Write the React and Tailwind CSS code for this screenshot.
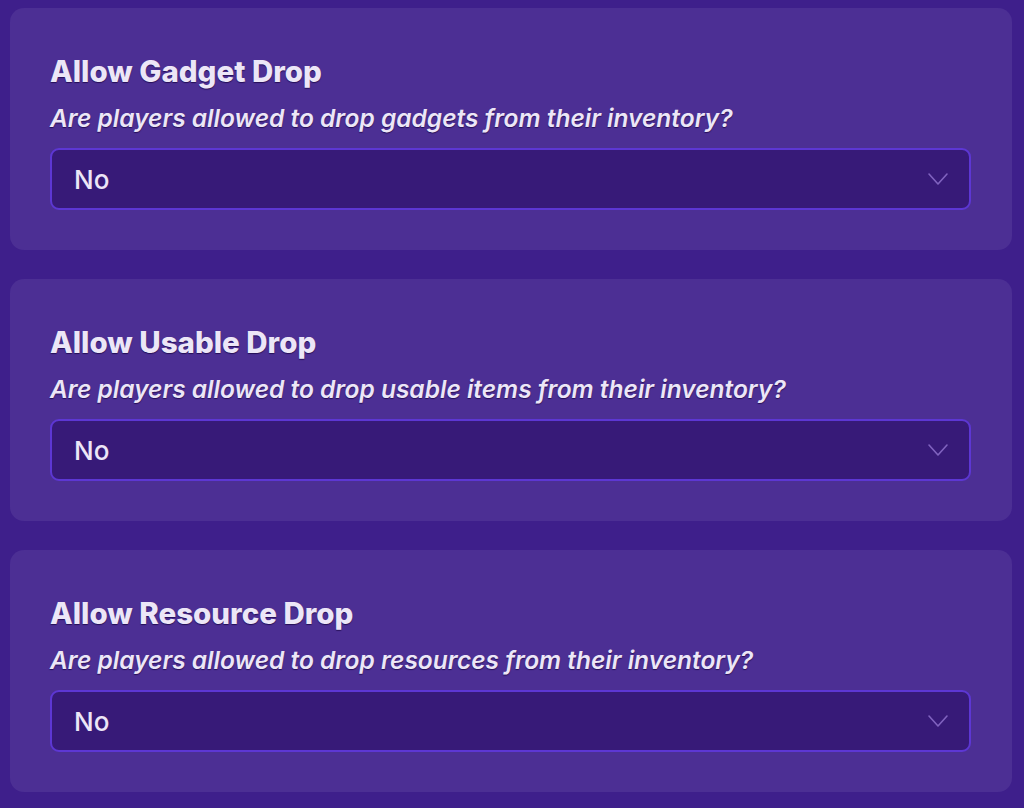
import React from "react";

const settings = [
  {
    title: "Allow Gadget Drop",
    description: "Are players allowed to drop gadgets from their inventory?",
    value: "No",
  },
  {
    title: "Allow Usable Drop",
    description: "Are players allowed to drop usable items from their inventory?",
    value: "No",
  },
  {
    title: "Allow Resource Drop",
    description: "Are players allowed to drop resources from their inventory?",
    value: "No",
  },
];

const ChevronDown = () => (
  <svg width="22" height="14" viewBox="0 0 22 14" fill="none">
    <path d="M2 2 L11 12 L20 2" stroke="#8063bf" strokeWidth="1.6" strokeLinecap="round" strokeLinejoin="round" />
  </svg>
);

const SettingCard = ({ title, description, value }) => {
  return (
    <div className="bg-[#4c2f94] rounded-[14px] pl-10 pr-[41px] pt-[45px] pb-10">
      <h2 className="text-[29.5px] leading-[36px] font-extrabold text-[#ece6f7] [text-shadow:0_1px_1px_rgba(20,0,60,0.7)]">
        {title}
      </h2>
      <p className="mt-[12px] text-[24.5px] leading-[34px] italic font-semibold text-[#ece6f7] [text-shadow:0_1px_1px_rgba(20,0,60,0.7)]">
        {description}
      </p>
      <div className="mt-[13px] h-[62px] flex items-center justify-between bg-[#371a78] border-2 border-[#5d37d3] rounded-[9px] pl-[22px] pr-[20px]">
        <span className="text-[26px] font-medium text-[#ece6f7]">{value}</span>
        <ChevronDown />
      </div>
    </div>
  );
};

export default function App() {
  return (
    <div
      className="min-h-[808px] bg-[#3e1f8b] pl-[10px] pr-[12px] pt-[8px] pb-[14px] flex flex-col gap-[29px]"
      style={{ fontFamily: "Inter, 'Noto Sans', sans-serif" }}
    >
      {settings.map((s) => (
        <SettingCard key={s.title} {...s} />
      ))}
    </div>
  );
}
